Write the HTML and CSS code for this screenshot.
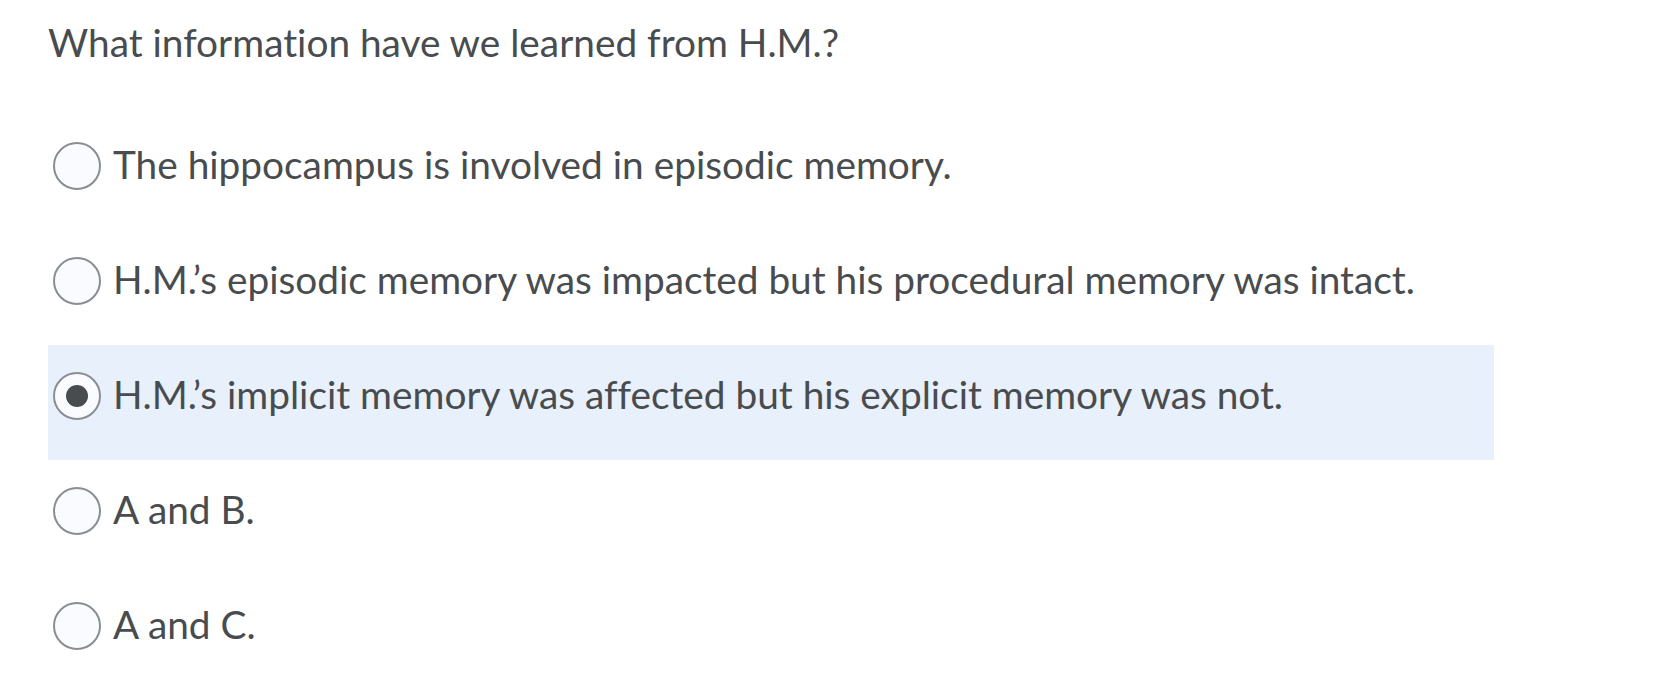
FILE: index.html
```html
<!DOCTYPE html>
<html lang="en">
<head>
    <meta charset="UTF-8">
    <title>Quiz question</title>
    <link rel="stylesheet" href="styles.css">
</head>
<body>
    <div class="question">
        <p class="question-text">What information have we learned from H.M.?</p>

        <!-- Варианты ответа -->
        <div class="choices">
            <label class="choice">
                <input type="radio" name="hm">
                <span>The hippocampus is involved in episodic memory.</span>
            </label>
            <label class="choice">
                <input type="radio" name="hm">
                <span>H.M.’s episodic memory was impacted but his procedural memory was intact.</span>
            </label>
            <label class="choice selected">
                <input type="radio" name="hm" checked>
                <span>H.M.’s implicit memory was affected but his explicit memory was not.</span>
            </label>
            <label class="choice">
                <input type="radio" name="hm">
                <span>A and B.</span>
            </label>
            <label class="choice">
                <input type="radio" name="hm">
                <span>A and C.</span>
            </label>
        </div>
    </div>
</body>
</html>
```

FILE: styles.css
```css
body {
    margin: 0;
    padding: 0;
    background: #fff;
    color: #494c4e;
    font-family: Lato, "Open Sans", sans-serif;
    font-variant-ligatures: none;
}

.question {
    width: 1446px;
    padding: 0 0 0 48px;
}

.question-text {
    margin: 0;
    padding: 18px 0 0 0;
    height: 115px;
    box-sizing: border-box;
    font-size: 38.8px;
    line-height: 48px;
}

.choices {
    display: flex;
    flex-direction: column;
}

.choice {
    display: flex;
    align-items: flex-start;
    gap: 12px;
    height: 115px;
    padding: 27px 0 0 5px;
    box-sizing: border-box;
    font-size: 38.8px;
    line-height: 45px;
    cursor: pointer;
}

.choice.selected {
    background: #e8f0fb;
}

.choice input {
    appearance: none;
    -webkit-appearance: none;
    flex: none;
    width: 48px;
    height: 48px;
    margin: 0;
    border: 2px solid #898e92;
    border-radius: 50%;
    background: #f9fbff;
    display: grid;
    place-items: center;
}

.choice input:checked::before {
    content: "";
    width: 22px;
    height: 22px;
    border-radius: 50%;
    background: #494c4e;
}
```
